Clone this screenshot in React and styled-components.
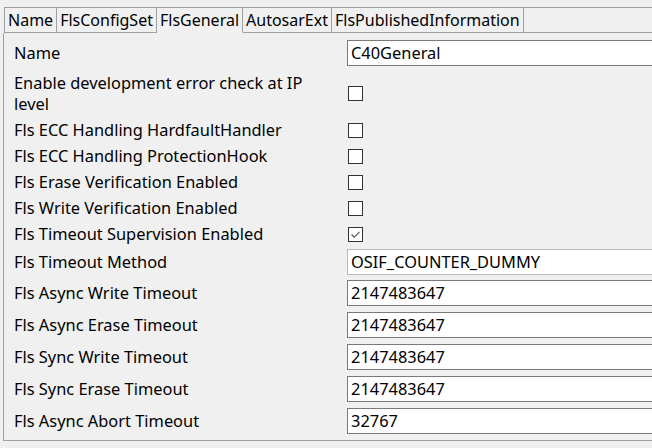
import React from "react";
import styled, { createGlobalStyle } from "styled-components";

const GlobalStyle = createGlobalStyle`
  html, body {
    margin: 0;
    padding: 0;
    overflow: hidden;
    background: #f0f0f0;
  }

  body {
    font-family: "Noto Sans", "Open Sans", sans-serif;
    font-size: 16.4px;
    color: #000;
  }
`;

const Page = styled.div`
  width: 652px;
  height: 448px;
  overflow: hidden;
  padding-top: 7px;
  box-sizing: border-box;
`;

const TabBar = styled.div`
  display: flex;
  margin-left: 4px;
  height: 25px;
  border-top: 1px solid #a0a0a0;
`;

const Tab = styled.div`
  display: flex;
  align-items: center;
  padding: 0 3px 1px 3px;
  font-size: 16px;
  white-space: nowrap;
  border-right: 1px solid #a0a0a0;
  border-bottom: 1px solid ${props => (props.active ? "transparent" : "#a0a0a0")};

  &:first-child {
    border-left: 1px solid #a0a0a0;
  }
`;

const TabFiller = styled.div`
  flex: 1 1 auto;
  border-bottom: 1px solid #a0a0a0;
`;

const Panel = styled.div`
  margin-left: 3px;
  width: 700px;
  padding: 4px 0 3px 10px;
  border-left: 1px solid #a0a0a0;
  border-bottom: 1px solid #a0a0a0;
`;

const Row = styled.div`
  display: grid;
  grid-template-columns: 333px 1fr;
  align-items: center;
  height: ${props => props.h}px;
`;

const Label = styled.div`
  line-height: 21px;
  max-width: 318px;
  margin-top: -1px;
  white-space: nowrap;

  &[data-wrap] {
    white-space: normal;
  }
`;

const TextBox = styled.div`
  box-sizing: border-box;
  height: 26px;
  width: 340px;
  padding: 0 3px 1px;
  display: flex;
  align-items: center;
  background: #fff;
  border: 1px solid ${props => (props.light ? "#b9b9b9" : "#7a7a7a")};
  white-space: nowrap;
`;

const Box = styled.div`
  box-sizing: border-box;
  width: 15px;
  height: 15px;
  margin-left: 1px;
  background: #fff;
  border: 1px solid #333;
  display: flex;
  align-items: center;
  justify-content: center;
`;

function CheckBox({ checked }) {
  return (
    <Box>
      {checked ? (
        <svg width="11" height="11" viewBox="0 0 11 11">
          <path d="M1.5 5.5 L4.3 8.2 L9.5 2.8" fill="none" stroke="#555" strokeWidth="1.1" />
        </svg>
      ) : null}
    </Box>
  );
}

const tabs = ["Name", "FlsConfigSet", "FlsGeneral", "AutosarExt", "FlsPublishedInformation"];

const checks = [
  ["Fls ECC Handling HardfaultHandler", false],
  ["Fls ECC Handling ProtectionHook", false],
  ["Fls Erase Verification Enabled", false],
  ["Fls Write Verification Enabled", false],
  ["Fls Timeout Supervision Enabled", true]
];

const timeouts = [
  ["Fls Async Write Timeout", "2147483647"],
  ["Fls Async Erase Timeout", "2147483647"],
  ["Fls Sync Write Timeout", "2147483647"],
  ["Fls Sync Erase Timeout", "2147483647"],
  ["Fls Async Abort Timeout", "32767"]
];

export default function App() {
  return (
    <Page>
      <GlobalStyle />
      <TabBar>
        {tabs.map(t => (
          <Tab key={t} active={t === "FlsGeneral"}>
            {t}
          </Tab>
        ))}
        <TabFiller />
      </TabBar>
      <Panel>
        <Row h={32}>
          <Label>Name</Label>
          <TextBox>C40General</TextBox>
        </Row>
        <Row h={48}>
          <Label data-wrap>Enable development error check at IP level</Label>
          <CheckBox />
        </Row>
        {checks.map(([label, on]) => (
          <Row key={label} h={26}>
            <Label>{label}</Label>
            <CheckBox checked={on} />
          </Row>
        ))}
        <Row h={30}>
          <Label>Fls Timeout Method</Label>
          <TextBox light>OSIF_COUNTER_DUMMY</TextBox>
        </Row>
        {timeouts.map(([label, value]) => (
          <Row key={label} h={32}>
            <Label>{label}</Label>
            <TextBox>{value}</TextBox>
          </Row>
        ))}
      </Panel>
    </Page>
  );
}
